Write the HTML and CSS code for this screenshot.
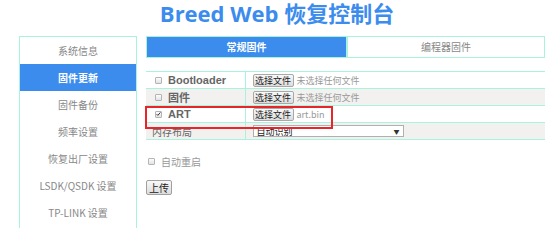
FILE: index.html
```html
<!DOCTYPE html>
<html lang="zh-CN">
<head>
  <meta charset="UTF-8" />
  <title>Breed Web 恢复控制台</title>
  <link rel="stylesheet" href="styles.css">
</head>
<body>
  <h1 class="title">Breed Web 恢复控制台</h1>

  <div class="layout">
    <ul class="nav">
      <li>系统信息</li>
      <li class="active">固件更新</li>
      <li>固件备份</li>
      <li>频率设置</li>
      <li>恢复出厂设置</li>
      <li>LSDK/QSDK 设置</li>
      <li>TP-LINK 设置</li>
    </ul>

    <div class="main">
      <div class="tabs">
        <div class="tab active">常规固件</div>
        <div class="tab">编程器固件</div>
      </div>

      <table class="files">
        <tr>
          <td class="label"><div class="cell"><span class="check"></span>Bootloader</div></td>
          <td class="value"><div class="cell"><span class="file-btn">选择文件</span><span class="file-name">未选择任何文件</span></div></td>
        </tr>
        <tr class="alt">
          <td class="label"><div class="cell"><span class="check"></span>固件</div></td>
          <td class="value"><div class="cell"><span class="file-btn">选择文件</span><span class="file-name">未选择任何文件</span></div></td>
        </tr>
        <tr>
          <td class="label"><div class="cell"><span class="check"><svg viewBox="0 0 8 8" width="6" height="6"><path d="M1 4.2 L3 6.2 L7 1.5" fill="none" stroke="#333" stroke-width="1.6"/></svg></span>ART</div></td>
          <td class="value"><div class="cell"><span class="file-btn">选择文件</span><span class="file-name">art.bin</span></div></td>
        </tr>
        <tr class="alt">
          <td class="label plain"><div class="cell">内存布局</div></td>
          <td class="value"><div class="cell"><div class="select"><span>自动识别</span><span class="arrow">▼</span></div></div></td>
        </tr>
      </table>

      <div class="option"><span class="check"></span>自动重启</div>
      <button class="upload">上传</button>

      <div class="mark"></div>
    </div>
  </div>
</body>
</html>
```

FILE: styles.css
```css
* {
  box-sizing: border-box;
}
body {
  margin: 0;
  overflow: hidden;
  background: #fff;
  font-family: 'Liberation Sans', 'Noto Sans CJK SC', sans-serif;
}
.title {
  margin: 0;
  height: 36px;
  line-height: 26px;
  text-align: center;
  font-family: 'Open Sans', 'Noto Sans CJK SC', sans-serif;
  font-size: 22px;
  font-weight: bold;
  color: #3b8ced;
}
.layout {
  display: flex;
  align-items: flex-start;
  gap: 9px;
  padding-left: 19px;
}
.nav {
  width: 118px;
  height: 200px;
  margin: 0;
  padding: 0;
  list-style: none;
  border: 1px solid #a9f3de;
  border-bottom: none;
}
.nav li {
  height: 27px;
  line-height: 27px;
  text-align: center;
  font-family: 'Noto Sans CJK SC', sans-serif;
  font-size: 10px;
  color: #888;
}
.nav li.active {
  background: #3b8ced;
  color: #fff;
  font-weight: bold;
}
.main {
  position: relative;
  width: 399px;
}
.tabs {
  display: flex;
  height: 22px;
}
.tab {
  width: 198px;
  border: 1px solid #a9f3de;
  line-height: 20px;
  text-align: center;
  font-family: 'Noto Sans CJK SC', sans-serif;
  font-size: 10px;
  color: #888;
}
.tab.active {
  width: 201px;
  background: #3b8ced;
  color: #fff;
  font-weight: bold;
}
.files {
  width: 399px;
  margin-top: 13px;
  border-collapse: collapse;
}
.files td {
  padding: 0;
  border-top: 1px solid #a9f3de;
  border-bottom: 1px solid #a9f3de;
  white-space: nowrap;
}
.files .cell {
  display: flex;
  align-items: center;
  height: 16px;
}
.files tr.alt td {
  background: #f2f1ef;
}
.files td.label {
  width: 99px;
  padding-left: 9px;
  border-right: 1px solid #a9f3de;
  font-size: 11px;
  font-weight: bold;
  color: #666;
}
.files td.label.plain {
  padding-left: 6px;
  font-family: 'Noto Sans CJK SC', sans-serif;
  font-weight: normal;
  font-size: 10px;
}
.files td.value {
  padding-left: 7px;
}
.check {
  display: inline-flex;
  flex: none;
  align-items: center;
  justify-content: center;
  width: 7px;
  height: 7px;
  margin-right: 6px;
  border: 1px solid #b4b4b4;
  border-radius: 1px;
  background: linear-gradient(#fdfdfd, #e2e2e2);
}
.file-btn {
  display: inline-block;
  width: 41px;
  height: 13px;
  line-height: 11px;
  text-align: center;
  border: 1px solid #a8a8a8;
  border-radius: 2px;
  background: linear-gradient(#f9f9f9, #dcdcdc);
  font-family: 'Noto Sans CJK SC', sans-serif;
  font-size: 9px;
  color: #222;
}
.file-name {
  margin-left: 3px;
  font-family: 'Noto Sans CJK SC', sans-serif;
  font-size: 9px;
  color: #999;
}
.select {
  display: flex;
  justify-content: space-between;
  align-items: center;
  width: 151px;
  height: 12px;
  padding: 0 3px;
  border: 1px solid #b0b0b0;
  background: #fff;
  font-family: 'Noto Sans CJK SC', sans-serif;
  font-size: 9px;
  color: #222;
}
.select .arrow {
  font-size: 6px;
  color: #333;
}
.option {
  display: flex;
  align-items: center;
  height: 8px;
  margin-top: 17px;
  padding-left: 2px;
  font-family: 'Noto Sans CJK SC', sans-serif;
  font-size: 10px;
  color: #999;
}
.upload {
  display: block;
  width: 26px;
  height: 15px;
  margin-top: 15px;
  padding: 0;
  border: 1px solid #a0a0a0;
  border-radius: 2px;
  background: linear-gradient(#f9f9f9, #dcdcdc);
  font-family: 'Noto Sans CJK SC', sans-serif;
  font-size: 10px;
  line-height: 12px;
  color: #222;
}
.mark {
  position: absolute;
  left: -1px;
  top: 70px;
  width: 188px;
  height: 23px;
  border: 2px solid #e8262a;
}
```
